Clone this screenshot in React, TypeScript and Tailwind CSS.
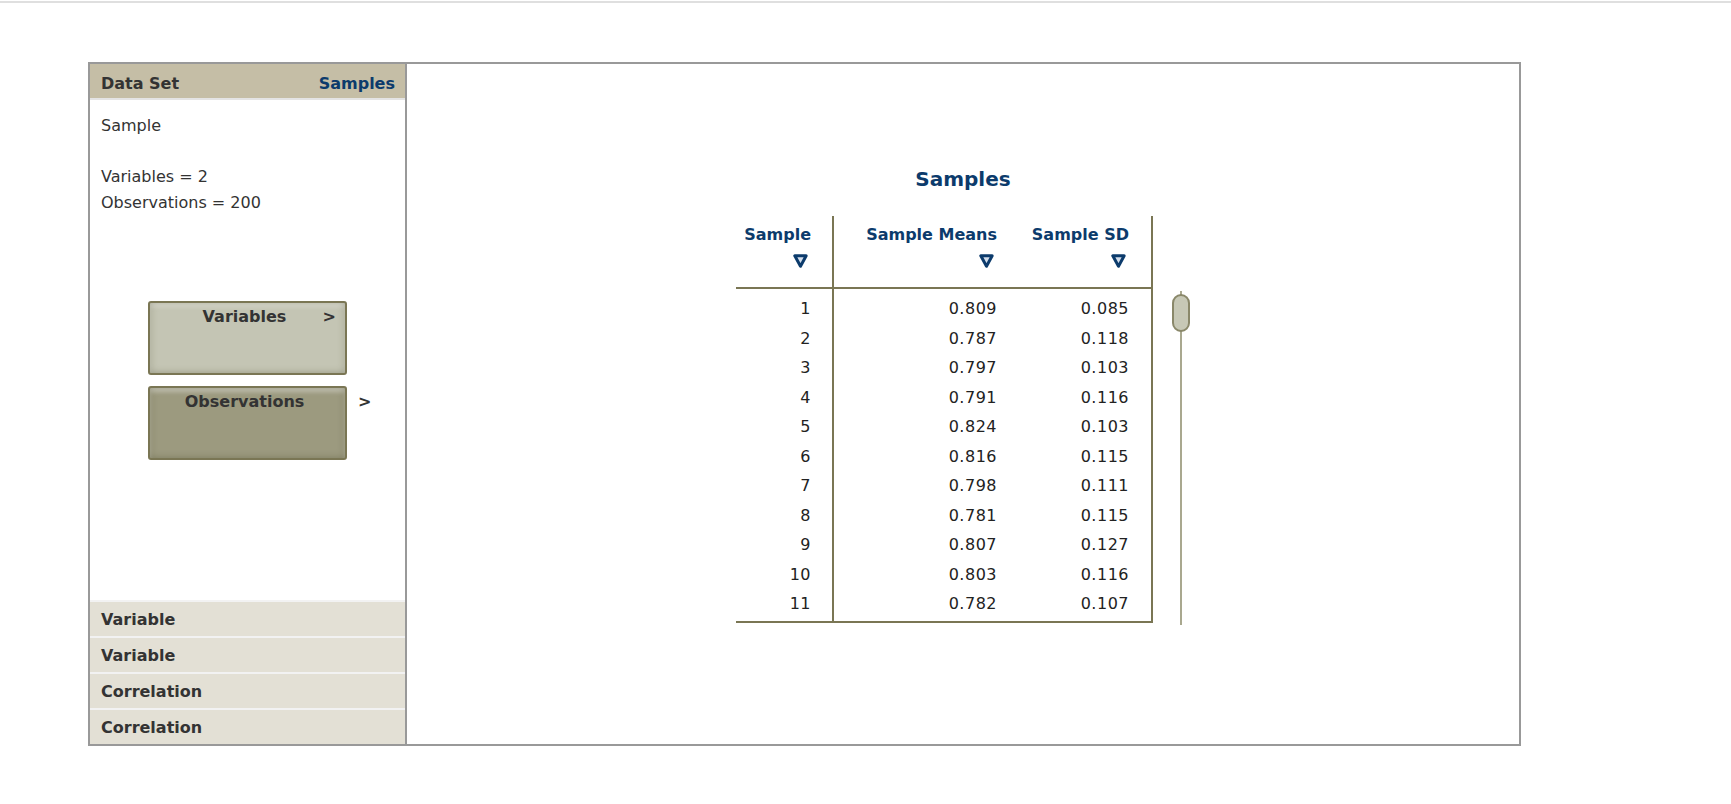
const rows = [
    ["1", "0.809", "0.085"],
    ["2", "0.787", "0.118"],
    ["3", "0.797", "0.103"],
    ["4", "0.791", "0.116"],
    ["5", "0.824", "0.103"],
    ["6", "0.816", "0.115"],
    ["7", "0.798", "0.111"],
    ["8", "0.781", "0.115"],
    ["9", "0.807", "0.127"],
    ["10", "0.803", "0.116"],
    ["11", "0.782", "0.107"],
];

const SortArrow = () => (
    <svg width="15" height="14" viewBox="0 0 15 14" className="mt-[9px] mr-[3px]">
        <path d="M1.8 1.8 L13.2 1.8 L7.5 12.2 Z" fill="#d3deec" stroke="#0c3b6c" strokeWidth="3" strokeLinejoin="round" />
    </svg>
);

const Column = ({ title, idx, className, pad }: { title: string; idx: number; className: string; pad: string }) => (
    <div className={className}>
        <div className={`h-[73px] border-b-2 border-[#7a7654] flex flex-col items-end pt-[9px] ${pad}`}>
            <span className="text-[16px] leading-[20px] font-bold text-[#0c3b6c]">{title}</span>
            <SortArrow />
        </div>
        <div className={`pt-[5px] pb-[2px] flex flex-col items-end ${pad}`}>
            {rows.map((r) => (
                <div key={r[0]} className="h-[29.5px] leading-[29.5px] text-[16px] tracking-[0.5px] text-[#222]">
                    {r[idx]}
                </div>
            ))}
        </div>
    </div>
);

const SideButton = ({ label, dark }: { label: string; dark?: boolean }) => (
    <div className="flex items-start">
        <div
            className={`relative w-[199px] h-[74px] border-2 border-[#7a7654] rounded-[3px] flex justify-center pt-[4px] pr-[6px] shadow-[inset_0_0_7px_rgba(60,60,30,0.35),inset_0_4px_4px_rgba(255,255,255,0.45)] ${dark ? "bg-[#9c9a7f]" : "bg-[#c4c5b4]"}`}
        >
            <span className="text-[16px] leading-[20px] font-bold text-[#333]">{label}</span>
            {!dark && (
                <span className="absolute right-[9px] top-[4px] text-[16px] leading-[20px] font-bold text-[#333]">&gt;</span>
            )}
        </div>
        {dark && <span className="ml-[11px] mt-[6px] text-[16px] leading-[20px] font-bold text-[#333]">&gt;</span>}
    </div>
);

export default function App() {
    return (
        <div className="min-h-screen bg-white font-['DejaVu_Sans',sans-serif]">
            <div className="mt-[1px] h-[2px] bg-[#dfdfdf]" />
            <div className="ml-[88px] mt-[59px] w-[1433px] h-[684px] border-2 border-[#999] flex">
                {/* sidebar */}
                <div className="w-[317px] border-r-2 border-[#999] flex flex-col">
                    <div className="h-[36px] bg-[#c5bea6] border-b-2 border-[#e4e4e4] flex items-center justify-between pl-[11px] pr-[10px] pt-[5px] text-[16px] font-bold">
                        <span className="text-[#333]">Data Set</span>
                        <span className="text-[#0c3b6c]">Samples</span>
                    </div>
                    <div className="flex-1 px-[11px] pt-[13px] text-[16px] leading-[26px] text-[#333]">
                        <div>Sample</div>
                        <div className="h-[25px]" />
                        <div>Variables = 2</div>
                        <div>Observations = 200</div>
                        <div className="mt-[85px] ml-[47px] flex flex-col gap-[11px]">
                            <SideButton label="Variables" />
                            <SideButton label="Observations" dark />
                        </div>
                    </div>
                    {["Variable", "Variable", "Correlation", "Correlation"].map((t, i) => (
                        <div
                            key={i}
                            className="h-[36px] border-t-2 border-[#f2f2f2] bg-[#e3e0d5] flex items-center pl-[11px] pt-[1px] text-[16px] font-bold text-[#333]"
                        >
                            {t}
                        </div>
                    ))}
                </div>

                {/* main */}
                <div className="flex-1 flex flex-col items-center pt-[103px]">
                    <h2 className="text-[20px] leading-[24px] font-bold text-[#0c3b6c]">Samples</h2>
                    <div className="mt-[25px] flex items-start">
                        <div className="flex border-b-2 border-r-2 border-[#7a7654]">
                            <Column title="Sample" idx={0} className="w-[98px] border-r-2 border-[#7a7654]" pad="pr-[21px]" />
                            <Column title="Sample Means" idx={1} className="w-[170px]" pad="pr-[7px]" />
                            <Column title="Sample SD" idx={2} className="w-[147px]" pad="pr-[22px]" />
                        </div>
                        <div className="relative ml-[19px] mt-[75px] w-[18px] h-[334px] flex justify-center">
                            <div className="w-[2px] h-full bg-[#a9a88f]" />
                            <div className="absolute top-[3px] left-0 w-[18px] h-[38px] rounded-full bg-[#c7c8b6] border-2 border-[#8a886a]" />
                        </div>
                    </div>
                </div>
            </div>
        </div>
    );
}
